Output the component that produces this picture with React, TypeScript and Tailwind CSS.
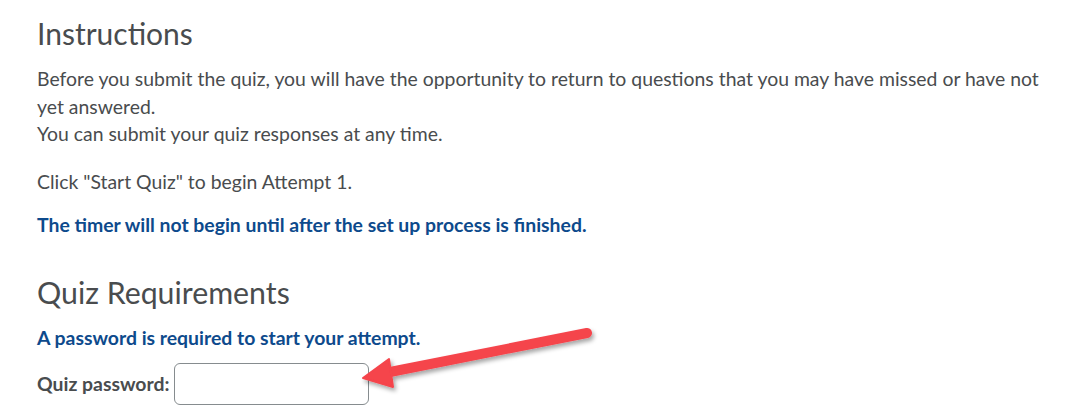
export default function App() {
  return (
    <div
      className="relative h-[414px] w-[1075px] overflow-hidden bg-white pl-[37px] pr-4 text-[#494c4e]"
      style={{ fontFamily: "Lato, 'Open Sans', sans-serif" }}
    >
      {/* Instructions */}
      <h2 className="pt-[14px] text-[30px] font-normal leading-[38px]">Instructions</h2>
      <div className="mt-[13px] text-[19.4px] leading-[27.5px]">
        <p>
          Before you submit the quiz, you will have the opportunity to return to questions that you may have missed or have not
          yet answered.
        </p>
        <p>You can submit your quiz responses at any time.</p>
      </div>
      <p className="mt-[20px] text-[19.4px] leading-[27.5px]">Click "Start Quiz" to begin Attempt 1.</p>
      <p className="mt-[16px] text-[19.4px] font-bold leading-[27.5px] text-[#0d4a8c]">
        The timer will not begin until after the set up process is finished.
      </p>

      {/* Quiz Requirements */}
      <h2 className="mt-[34px] text-[30.3px] font-normal leading-[38px]">Quiz Requirements</h2>
      <p className="mt-[13px] text-[19.4px] font-bold leading-[27.5px] text-[#0d4a8c]">
        A password is required to start your attempt.
      </p>
      <div className="mt-[12px] flex items-center gap-[5px]">
        <label className="text-[19.4px] font-bold">Quiz password:</label>
        <input
          type="password"
          className="h-[42px] w-[195px] rounded-[6px] border border-[#868c8f] bg-white outline-none"
        />
      </div>

      {/* annotation arrow */}
      <svg className="absolute left-0 top-0 h-[414px] w-[1075px]" viewBox="0 0 1075 414">
        <defs>
          <filter id="sh" x="-20%" y="-50%" width="140%" height="200%">
            <feDropShadow dx="2" dy="3" stdDeviation="2" floodColor="#000" floodOpacity="0.35" />
          </filter>
        </defs>
        <g filter="url(#sh)" fill="#f5444c" stroke="#f5444c">
          <line x1="587" y1="333" x2="385" y2="373" strokeWidth="10" strokeLinecap="round" />
          <polygon points="363,378 389,359 393,387" strokeWidth="2" strokeLinejoin="round" />
        </g>
      </svg>
    </div>
  );
}
